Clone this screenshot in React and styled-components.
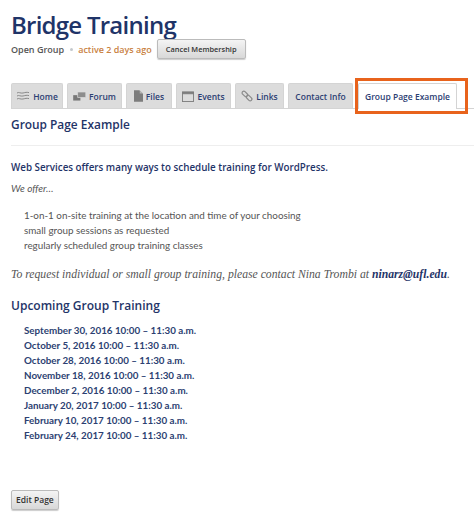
import React from 'react'
import styled, { createGlobalStyle } from 'styled-components'

const navy = '#1f3468'
const heading = '"Open Sans", sans-serif'
const body = 'Lato, sans-serif'

const GlobalStyle = createGlobalStyle`
    body {
        margin: 0;
        background: #fff;
        font-family: ${body};
    }
`

function HomeIcon() {
    return (
        <svg width="14" height="10" viewBox="0 0 14 10" fill="none" stroke="#8a8a8a" strokeWidth="1">
            <path d="M1 2c2-1.4 3 .6 6 0s3-1 6-.4M1 5c2-1.4 3 .6 6 0s3-1 6-.4M1 8c2-1.4 3 .6 6 0s3-1 6-.4" />
        </svg>
    )
}

function ForumIcon() {
    return (
        <svg width="13" height="9" viewBox="0 0 14 10" fill="#777">
            <rect x="0" y="3.5" width="8" height="6" />
            <rect x="5" y="0" width="9" height="6" fill="#8d8d8d" stroke="#d8d8d8" strokeWidth=".8" />
        </svg>
    )
}

function FilesIcon() {
    return (
        <svg width="9" height="12" viewBox="0 0 10 13" fill="#7d7d7d">
            <path d="M0 0h6l4 4v9H0z" />
            <path d="M6.4 0l3.6 3.6H6.4z" fill="#b5b5b5" />
        </svg>
    )
}

function EventsIcon() {
    return (
        <svg width="12" height="11" viewBox="0 0 13 12" fill="none" stroke="#7d7d7d">
            <rect x=".5" y="1.5" width="12" height="10" />
            <rect x=".5" y="1" width="12" height="2" fill="#7d7d7d" />
        </svg>
    )
}

function LinksIcon() {
    return (
        <svg width="12" height="12" viewBox="0 0 14 14" fill="none" stroke="#8a8a8a" strokeWidth="1.4">
            <rect x=".8" y="2.6" width="7.4" height="4" rx="2" transform="rotate(45 4.5 4.6)" />
            <rect x="5.8" y="7.4" width="7.4" height="4" rx="2" transform="rotate(45 9.5 9.4)" />
        </svg>
    )
}

const tabs = [
    { label: 'Home', icon: <HomeIcon />, width: 52 },
    { label: 'Forum', icon: <ForumIcon />, width: 55 },
    { label: 'Files', icon: <FilesIcon />, width: 46 },
    { label: 'Events', icon: <EventsIcon />, width: 55 },
    { label: 'Links', icon: <LinksIcon />, width: 49 },
    { label: 'Contact Info', width: 65 },
]

const dates = [
    'September 30, 2016 10:00 – 11:30 a.m.',
    'October 5, 2016 10:00 – 11:30 a.m.',
    'October 28, 2016 10:00 – 11:30 a.m.',
    'November 18, 2016 10:00 – 11:30 a.m.',
    'December 2, 2016 10:00 – 11:30 a.m.',
    'January 20, 2017 10:00 – 11:30 a.m.',
    'February 10, 2017 10:00 – 11:30 a.m.',
    'February 24, 2017 10:00 – 11:30 a.m.',
]

export default function App() {
    return (
        <Page>
            <GlobalStyle />
            <Title>Bridge Training</Title>
            <Meta>
                <span>Open Group</span>
                <Dot />
                <Active>active 2 days ago</Active>
                <Button>Cancel Membership</Button>
            </Meta>
            <TabBar>
                {tabs.map(tab => (
                    <Tab key={tab.label} $width={tab.width}>
                        {tab.icon}
                        {tab.label}
                    </Tab>
                ))}
                <ActiveTab>
                    Group Page Example
                    <Highlight />
                </ActiveTab>
            </TabBar>
            <PageTitle>Group Page Example</PageTitle>
            <Rule />
            <Intro>Web Services offers many ways to schedule training for WordPress.</Intro>
            <Offer>We offer…</Offer>
            <OfferList>
                <li>1-on-1 on-site training at the location and time of your choosing</li>
                <li>small group sessions as requested</li>
                <li>regularly scheduled group training classes</li>
            </OfferList>
            <Contact>
                To request individual or small group training, please contact Nina Trombi at <a href="#mail">ninarz@ufl.edu</a>.
            </Contact>
            <Upcoming>Upcoming Group Training</Upcoming>
            <DateList>
                {dates.map(date => <li key={date}>{date}</li>)}
            </DateList>
            <Button $edit>Edit Page</Button>
        </Page>
    )
}

const Page = styled.div`
    width: 474px;
    height: 520px;
    overflow: hidden;
    box-sizing: border-box;
    padding: 10px 0 0 11px;
`

const Title = styled.h1`
    margin: 0;
    font-family: ${heading};
    font-weight: 600;
    font-size: 24px;
    letter-spacing: -.75px;
    line-height: 30px;
    color: ${navy};
`

const Meta = styled.div`
    display: flex;
    align-items: center;
    height: 20px;
    margin-top: -1px;
    font-family: ${heading};
    font-weight: 600;
    font-size: 9px;
    color: #555;
`

const Dot = styled.i`
    width: 3px;
    height: 3px;
    margin: 0 5px 0 6px;
    border-radius: 50%;
    background: #c4c8cc;
`

const Active = styled.span`
    margin-right: 5px;
    color: #c9813f;
`

const Button = styled.button`
    height: 20px;
    padding: 0 ${p => (p.$edit ? '4px' : '8px')};
    border: 1px solid #bbb;
    border-radius: 2px;
    background: linear-gradient(#f4f4f4, #d8d8d8);
    box-shadow: 0 1px 1px rgba(0, 0, 0, .2);
    font-family: ${heading};
    font-weight: 600;
    font-size: ${p => (p.$edit ? '8.5px' : '7.4px')};
    color: #333;
`

const TabBar = styled.div`
    display: flex;
    align-items: flex-end;
    gap: 4px;
    height: 25px;
    margin-top: 24px;
    border-bottom: 1px solid #d4d4d4;
`

const Tab = styled.div`
    display: flex;
    align-items: center;
    justify-content: center;
    gap: 3px;
    box-sizing: border-box;
    width: ${p => p.$width}px;
    height: 25px;
    background: #dcdcdc;
    border: 1px solid #d4d4d4;
    border-bottom: none;
    border-radius: 2px 2px 0 0;
    font-family: ${heading};
    font-weight: 600;
    font-size: 8.5px;
    color: #2c4073;
`

const ActiveTab = styled(Tab)`
    position: relative;
    width: 99px;
    margin-left: 1px;
    height: 26px;
    margin-bottom: -1px;
    background: #fff;
`

const Highlight = styled.span`
    position: absolute;
    top: -6px;
    left: -4px;
    width: 113px;
    height: 36px;
    box-sizing: border-box;
    border: 3px solid #e8631c;
`

const PageTitle = styled.h2`
    margin: 7px 0 0;
    font-family: ${heading};
    font-weight: 600;
    font-size: 11.9px;
    line-height: 17px;
    color: ${navy};
`

const Rule = styled.hr`
    height: 1px;
    margin: 12px 0 0 0;
    border: none;
    background: #eee;
`

const Intro = styled.p`
    margin: 14px 0 0;
    font-family: ${heading};
    font-weight: 600;
    font-size: 9.8px;
    line-height: 15px;
    color: ${navy};
`

const Offer = styled.p`
    margin: 6px 0 0;
    font-style: italic;
    font-size: 10px;
    line-height: 15px;
    color: #555;
`

const OfferList = styled.ul`
    list-style: none;
    margin: 12px 0 0;
    padding: 0 0 0 13px;
    font-size: 9.85px;
    line-height: 15px;
    color: #555;
`

const Contact = styled.p`
    margin: 14px 0 0;
    font-family: "Liberation Serif", serif;
    font-style: italic;
    font-size: 11.7px;
    line-height: 16px;
    white-space: nowrap;
    color: #555;

    a {
        font-weight: 700;
        color: ${navy};
        text-decoration: none;
    }
`

const Upcoming = styled.h2`
    margin: 14px 0 0;
    font-family: ${heading};
    font-weight: 600;
    font-size: 12px;
    line-height: 18px;
    color: ${navy};
`

const DateList = styled.ul`
    list-style: none;
    margin: 8px 0 44px;
    padding: 0 0 0 13px;
    font-weight: 700;
    font-size: 9.8px;
    line-height: 15px;
    color: #2c3f72;
`
